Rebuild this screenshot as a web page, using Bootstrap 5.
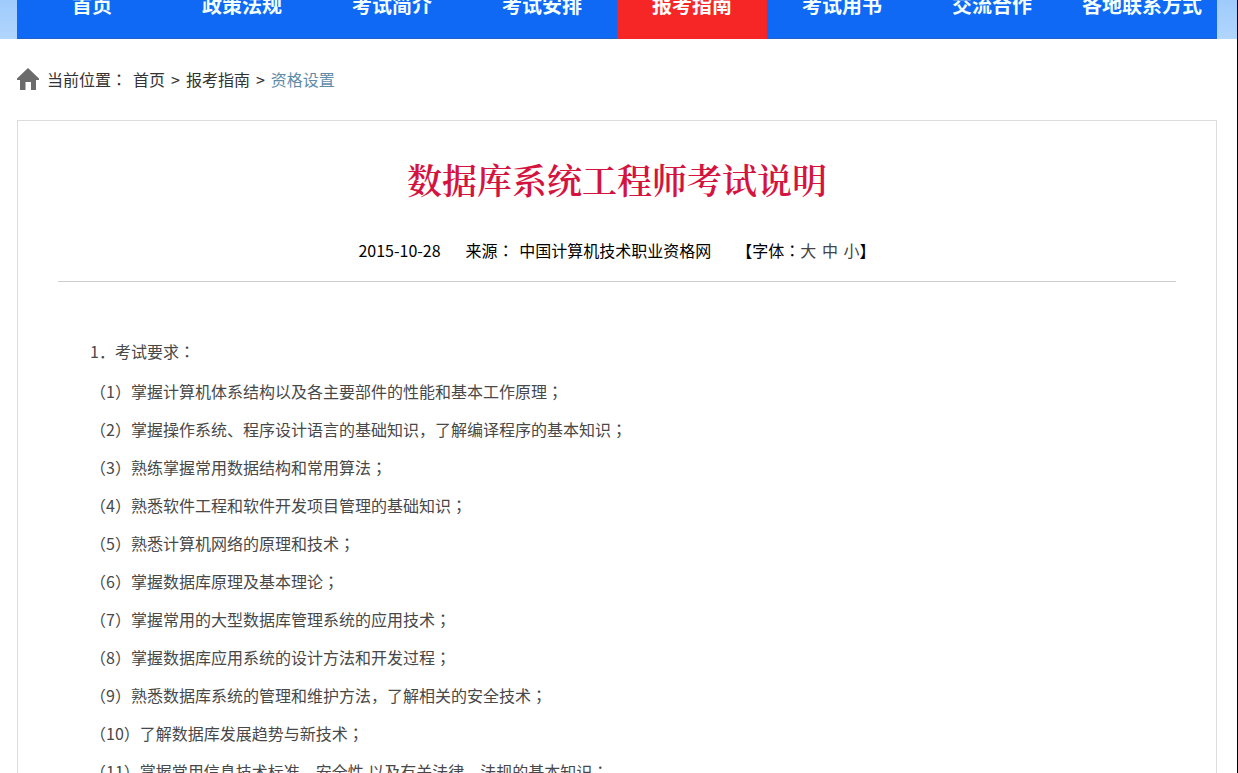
<!DOCTYPE html>
<html lang="zh-CN">
<head>
<meta charset="utf-8">
<meta name="viewport" content="width=device-width, initial-scale=1">
<title>数据库系统工程师考试说明</title>
<link rel="stylesheet" href="https://cdn.jsdelivr.net/npm/bootstrap@5.3.0/dist/css/bootstrap.min.css">
<style>
  html { scrollbar-width: none; }
  html::-webkit-scrollbar { display: none; }
  body { font: 16px/24px "Noto Sans CJK SC", sans-serif; color: #333; background: #fff; }
  a { color: inherit; text-decoration: none; }
  .page { border-right: 1px solid #000; display: flow-root; }
  .gutter { padding: 0 20px 0 17px; }
  /* the header starts above the visible area */
  .top-band { background: linear-gradient(#8fc2fb, #b2d6fd); margin-top: -29px; }
  .main-nav { background: #0f69f5; box-shadow: inset 0 -1px #1f62c8; }
  .main-nav .nav-link { color: #f2fffc; font-size: 20px; font-weight: 700; line-height: 68px; padding: 0; white-space: nowrap; }
  .main-nav .nav-link.active { background: #f62626; color: #fff; }
  .crumbs { padding: 28px 0; gap: 6px; line-height: 25px; }
  .crumbs .here { color: #5f8ca8; }
  .article { border: 1px solid #ddd; padding: 34px 40px; }
  .article h1 { font-family: "Noto Serif CJK SC", "Noto Sans CJK SC", serif; font-size: 35px; font-weight: 600; line-height: 48px; color: #d4143f; margin: 0 0 35px; }
  .info { color: #000; gap: 25px; padding-bottom: 19px; border-bottom: 1px solid #ccc; }
  .info a { color: #444; }
  .info a + a, .info .source { margin-left: 2px; }
  .content { padding: 50px 32px 0; line-height: 38px; color: #484848; }
  .content p { margin: 0 0 2px; }
  /* colons, semicolons and brackets centred in their square */
  i { font-style: normal; font-family: "Noto Sans CJK TC", sans-serif; font-feature-settings: "locl" 0; }
</style>
</head>
<body>
<div class="page min-vh-100">
  <header class="top-band gutter">
    <nav class="main-nav">
      <ul class="nav nav-fill flex-nowrap row g-0 text-center">
        <li class="nav-item col"><a class="nav-link" href="#">首页</a></li>
        <li class="nav-item col"><a class="nav-link" href="#">政策法规</a></li>
        <li class="nav-item col"><a class="nav-link" href="#">考试简介</a></li>
        <li class="nav-item col"><a class="nav-link" href="#">考试安排</a></li>
        <li class="nav-item col"><a class="nav-link active" href="#">报考指南</a></li>
        <li class="nav-item col"><a class="nav-link" href="#">考试用书</a></li>
        <li class="nav-item col"><a class="nav-link" href="#">交流合作</a></li>
        <li class="nav-item col"><a class="nav-link" href="#">各地联系方式</a></li>
      </ul>
    </nav>
  </header>
  <div class="gutter">
    <nav class="crumbs d-flex align-items-center" aria-label="当前位置">
      <svg width="24" height="23" viewBox="0 0 24 23" fill="#6b6b6b" aria-hidden="true"><path d="M11 0 22 10.500V12H19V21.500Q19 22 18 22H14V14H8.500V22H4Q3 22 3 21.500V12H0V10.500Z"/></svg>
      <span>当前位置<i>：</i></span>
      <a href="#">首页</a>
      <span>&gt;</span>
      <a href="#">报考指南</a>
      <span>&gt;</span>
      <a class="here" href="#">资格设置</a>
    </nav>
    <main class="article">
      <h1 class="text-center">数据库系统工程师考试说明</h1>
      <div class="info d-flex justify-content-center">
        <span>2015-10-28</span>
        <span>来源<i>：</i> <span class="source">中国计算机技术职业资格网</span></span>
        <span>【字体<i>：</i><a href="#">大</a> <a href="#">中</a> <a href="#">小</a>】</span>
      </div>
      <div class="content">
        <p>1．考试要求<i>：</i></p>
        <div><i>（</i>1<i>）</i>掌握计算机体系结构以及各主要部件的性能和基本工作原理<i>；</i></div>
        <div><i>（</i>2<i>）</i>掌握操作系统、程序设计语言的基础知识，了解编译程序的基本知识<i>；</i></div>
        <div><i>（</i>3<i>）</i>熟练掌握常用数据结构和常用算法<i>；</i></div>
        <div><i>（</i>4<i>）</i>熟悉软件工程和软件开发项目管理的基础知识<i>；</i></div>
        <div><i>（</i>5<i>）</i>熟悉计算机网络的原理和技术<i>；</i></div>
        <div><i>（</i>6<i>）</i>掌握数据库原理及基本理论<i>；</i></div>
        <div><i>（</i>7<i>）</i>掌握常用的大型数据库管理系统的应用技术<i>；</i></div>
        <div><i>（</i>8<i>）</i>掌握数据库应用系统的设计方法和开发过程<i>；</i></div>
        <div><i>（</i>9<i>）</i>熟悉数据库系统的管理和维护方法，了解相关的安全技术<i>；</i></div>
        <div><i>（</i>10<i>）</i>了解数据库发展趋势与新技术<i>；</i></div>
        <div><i>（</i>11<i>）</i>掌握常用信息技术标准、安全性,以及有关法律、法规的基本知识<i>；</i></div>
      </div>
    </main>
  </div>
</div>
<script src="https://cdn.jsdelivr.net/npm/bootstrap@5.3.0/dist/js/bootstrap.bundle.min.js"></script>
</body>
</html>
